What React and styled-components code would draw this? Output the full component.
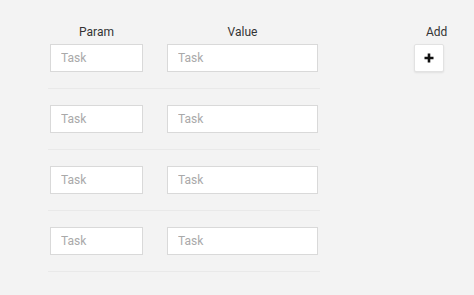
import React from 'react';
import styled, { createGlobalStyle } from 'styled-components';

const GlobalStyle = createGlobalStyle`
  body {
    margin: 0;
    background: #f3f3f3;
    font-family: Roboto, "Liberation Sans", sans-serif;
  }
`

const Page = styled.div`
  display: flex;
  align-items: flex-start;
  padding: 24px 0 0 48px;
  height: 295px;
  box-sizing: border-box;
`

const Table = styled.div`
  width: 272px;
`

const HeaderRow = styled.div`
  display: flex;
  gap: 24px;
  padding: 0 2px;
  height: 16px;
  margin-bottom: 4px;
`

const Heading = styled.div`
  width: ${props => props.width}px;
  text-align: center;
  font-size: 12px;
  line-height: 16px;
  color: #333333;
`

const Row = styled.div`
  display: flex;
  gap: 24px;
  padding: ${props => props.first ? '0' : '16px'} 2px 16px;
  border-bottom: 1px solid #e9e9e9;
`

const Field = styled.input`
  width: ${props => props.width}px;
  height: 28px;
  box-sizing: border-box;
  border: 1px solid #d9d9d9;
  background: #ffffff;
  padding: 0 10px;
  font-family: Roboto, "Liberation Sans", sans-serif;
  font-size: 12px;
  color: #333333;
  outline: none;

  &::placeholder {
    color: #a9a9a9;
  }
`

const AddColumn = styled.div`
  margin-left: 94px;
  display: flex;
  flex-direction: column;
  align-items: flex-start;
`

const AddLabel = styled.div`
  font-size: 12px;
  line-height: 16px;
  color: #333333;
  margin: 0 0 4px 12px;
`

const AddButton = styled.button`
  width: 30px;
  height: 28px;
  display: flex;
  align-items: center;
  justify-content: center;
  background: #ffffff;
  border: 1px solid #e2e2e2;
  border-radius: 2px;
  box-shadow: 0 1px 2px rgba(0, 0, 0, 0.08);
  padding: 0;
  cursor: pointer;
`

const rows = [0, 1, 2, 3]

export default function App() {
  return (
    <>
      <GlobalStyle />
      <Page>
        <Table>
          <HeaderRow>
            <Heading width={93}>Param</Heading>
            <Heading width={151}>Value</Heading>
          </HeaderRow>
          {rows.map(i =>
            <Row key={i} first={i === 0}>
              <Field width={93} placeholder="Task" />
              <Field width={151} placeholder="Task" />
            </Row>
          )}
        </Table>

        <AddColumn>
          <AddLabel>Add</AddLabel>
          <AddButton>
            <svg width="10" height="10" viewBox="0 0 10 10">
              <path d="M5 0.5v9M0.5 5h9" stroke="#111" strokeWidth="2.6" />
            </svg>
          </AddButton>
        </AddColumn>
      </Page>
    </>
  );
}
